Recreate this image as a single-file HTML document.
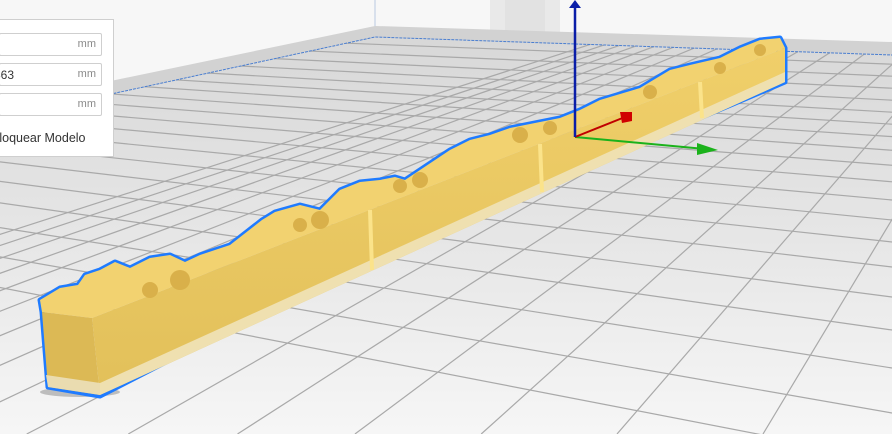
<!DOCTYPE html>
<html><head><meta charset="utf-8">
<style>
html,body{margin:0;padding:0;width:892px;height:434px;overflow:hidden;background:#f7f7f7;font-family:"Liberation Sans",sans-serif;}
#scene{position:absolute;left:0;top:0;overflow:hidden}
.panel{position:absolute;left:-2px;top:19px;width:116px;height:138px;background:#fff;border:1px solid #cfcfcf;box-sizing:border-box;overflow:hidden}
.inp{position:absolute;left:0;width:103px;height:23px;border:1px solid #cfcfcf;border-radius:2px;box-sizing:border-box;font-size:12px;color:#333}
.inp .u{position:absolute;right:5px;top:4px;color:#8a8a8a;font-size:11px}
.inp .v{position:absolute;left:-6px;top:4px}
.lbl{position:absolute;left:-8px;top:111px;font-size:12.5px;color:#333}
</style></head><body>
<svg id="scene" width="892" height="434" viewBox="0 0 892 434">
<defs>
<linearGradient id="pl" x1="0" y1="0" x2="0" y2="1">
<stop offset="0" stop-color="#d8d8d8"/><stop offset="0.5" stop-color="#e6e6e6"/><stop offset="1" stop-color="#f6f6f6"/></linearGradient>
<clipPath id="cp"><polygon points="375,37 892,55 892,434 0,434 0,118"/></clipPath>
<linearGradient id="side" x1="0" y1="0" x2="0" y2="1"><stop offset="0" stop-color="#f0cf6a"/><stop offset="1" stop-color="#e2c05a"/></linearGradient>
</defs>
<rect x="490" y="0" width="70" height="46" fill="#e9e9e9"/>
<rect x="505" y="0" width="40" height="44" fill="#e2e2e2"/>
<line x1="375" y1="0" x2="375" y2="37" stroke="#b8c8e0" stroke-width="1"/>
<polygon points="375,26 892,42 892,55 375,37 0,118 0,104" fill="#d2d2d2"/>
<polygon points="375,37 892,55 892,434 0,434 0,118" fill="url(#pl)"/>
<g id="grid" clip-path="url(#cp)" stroke="#a9a9a9" stroke-width="1.2" fill="none"></g>
<polyline points="0,118 375,37 892,55" fill="none" stroke="#4a7ed0" stroke-width="1" stroke-dasharray="3,1"/>
<ellipse cx="80" cy="392" rx="40" ry="5" fill="#9a9a9a" opacity="0.6"/>
<path d="M42,312 L40,300 L60,288 L78,285 L85,275 L100,270 L115,262 L130,268 L150,258 L170,255 L185,262 L200,255 L230,245 L262,220 L275,212 L300,205 L320,210 L340,190 L360,182 L380,180 L395,177 L405,180 L420,170 L450,150 L470,140 L490,135 L510,128 L530,124 L560,118 L580,110 L600,100 L640,88 L670,70 L690,65 L720,58 L740,48 L760,40 L780,38 L785,48 L785,82 L360,262 L100,396 L48,387 Z" fill="none" stroke="#1f7bff" stroke-width="5" stroke-linejoin="round"/>
<path d="M42,312 L40,300 L60,288 L78,285 L85,275 L100,270 L115,262 L130,268 L150,258 L170,255 L185,262 L200,255 L230,245 L262,220 L275,212 L300,205 L320,210 L340,190 L360,182 L380,180 L395,177 L405,180 L420,170 L450,150 L470,140 L490,135 L510,128 L530,124 L560,118 L580,110 L600,100 L640,88 L670,70 L690,65 L720,58 L740,48 L760,40 L780,38 L785,48 L92,318 Z" fill="#f2d270"/>
<polygon points="92,318 785,48 785,82 100,395" fill="url(#side)"/>
<polygon points="100,383 785,72 785,82 100,395" fill="#efe0b0"/>
<polygon points="42,312 92,318 100,395 48,387" fill="#dcb955"/>
<polygon points="46,375 100,383 100,395 48,387" fill="#eadcb0"/>
<line x1="370" y1="210" x2="372" y2="270" stroke="#fbe38a" stroke-width="4"/>
<line x1="540" y1="144" x2="542" y2="192" stroke="#fbe38a" stroke-width="4"/>
<line x1="700" y1="82" x2="702" y2="118" stroke="#fbe38a" stroke-width="4"/>
<g fill="#d9b04a">
<circle cx="180" cy="280" r="10"/><circle cx="150" cy="290" r="8"/><circle cx="320" cy="220" r="9"/><circle cx="300" cy="225" r="7"/><circle cx="420" cy="180" r="8"/><circle cx="400" cy="186" r="7"/><circle cx="520" cy="135" r="8"/><circle cx="550" cy="128" r="7"/><circle cx="650" cy="92" r="7"/><circle cx="720" cy="68" r="6"/><circle cx="760" cy="50" r="6"/>
</g>
<line x1="575" y1="137" x2="705" y2="149" stroke="#1bb21b" stroke-width="2"/>
<polygon points="697,143 718,150 697,155" fill="#1bb21b"/>
<line x1="575" y1="137" x2="625" y2="117" stroke="#c00000" stroke-width="2"/>
<polygon points="620,112 632,112 632,121 622,123" fill="#d00000"/>
<line x1="575" y1="137" x2="575" y2="6" stroke="#0a1ea8" stroke-width="2.5"/>
<polygon points="569,8 575,0 581,8" fill="#0a1ea8"/>
</svg>
<div class="panel">
<div class="inp" style="top:13px"><span class="u">mm</span></div>
<div class="inp" style="top:43px"><span class="v">363</span><span class="u">mm</span></div>
<div class="inp" style="top:73px"><span class="u">mm</span></div>
<div class="lbl">Bloquear Modelo</div>
</div>
<script>
var g=document.getElementById('grid'),ns='http://www.w3.org/2000/svg';
function L(x1,y1,x2,y2){var l=document.createElementNS(ns,'line');l.setAttribute('x1',x1);l.setAttribute('y1',y1);l.setAttribute('x2',x2);l.setAttribute('y2',y2);g.appendChild(l);}
var A=[-1662,-34],B=[1095,-118];
var ys=[220,242,267,297,330,368,413,460];
var y=220,gap=22;while(y>55){gap=Math.max(gap/1.1,12);y-=gap;ys.push(y);}
ys.forEach(function(yy){L(A[0],A[1],892,yy);});
var xs=[617,763,909];var x=617,gx=146;for(var i=0;i<14;i++){gx*=0.93;x-=gx;xs.push(x);}
xs.forEach(function(xx){L(B[0],B[1],xx,434);});
</script>
</body></html>
